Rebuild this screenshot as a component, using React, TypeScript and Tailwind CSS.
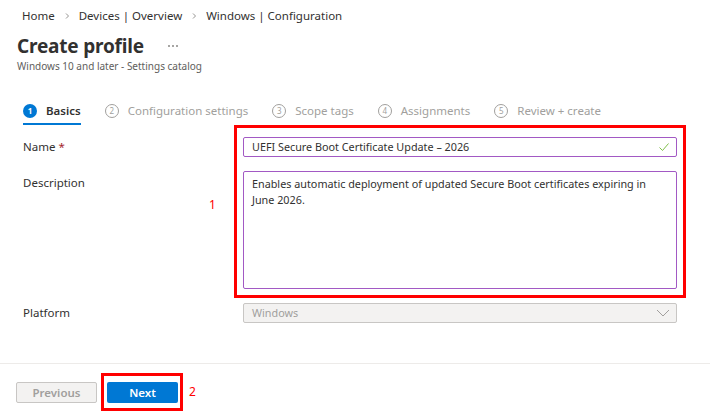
import React from "react";

const steps = [
  { n: 1, label: "Basics", active: true },
  { n: 2, label: "Configuration settings" },
  { n: 3, label: "Scope tags" },
  { n: 4, label: "Assignments" },
  { n: 5, label: "Review + create" },
];

const Chevron = () => (
  <svg width="8" height="8" viewBox="0 0 8 8" className="mx-[8px]">
    <path d="M3 1.5 5.5 4 3 6.5" fill="none" stroke="#8a8886" strokeWidth="0.9" />
  </svg>
);

const App: React.FC = () => {
  return (
    <div
      className="relative w-[710px] h-[420px] bg-white text-[#323130] overflow-hidden"
      style={{ fontFamily: '"Noto Sans", "Open Sans", sans-serif' }}
    >
      {/* breadcrumb */}
      <div className="flex items-center pl-[22px] pt-[6px] h-[32px] text-[11.5px] leading-[20px] items-start">
        <div className="flex items-center h-[20px]">
          <span>Home</span>
          <Chevron />
          <span>Devices | Overview</span>
          <Chevron />
          <span>Windows | Configuration</span>
        </div>
      </div>

      {/* title */}
      <div className="flex items-center pl-[17px] h-[28px]">
        <h1 className="text-[19px] font-bold leading-[28px] tracking-[-0.2px]">Create profile</h1>
        <span className="ml-[24px] flex gap-[2px] items-center">
          <span className="w-[2px] h-[2px] rounded-full bg-[#8a8886]" />
          <span className="w-[2px] h-[2px] rounded-full bg-[#8a8886]" />
          <span className="w-[2px] h-[2px] rounded-full bg-[#8a8886]" />
        </span>
      </div>
      <div className="pl-[17px] text-[10px] leading-[12px] text-[#605e5c]">
        Windows 10 and later - Settings catalog
      </div>

      {/* steps */}
      <div className="flex pl-[23px] mt-[28px] h-[25px]">
        {steps.map((s) => (
          <div
            key={s.n}
            className={`flex items-start h-[25px] mr-[24px] ${s.active ? "border-b-2 border-[#0078d4]" : ""}`}
          >
            <div className="flex items-center h-[22px]">
              <span
                className={`flex items-center justify-center w-[14px] h-[14px] rounded-full text-[8px] ${
                  s.active ? "bg-[#0078d4] text-white font-bold" : "border border-[#a19f9d] text-[#a19f9d]"
                }`}
              >
                {s.n}
              </span>
              <span
                className={`ml-[9px] text-[11.5px] ${s.active ? "font-semibold text-[#323130]" : "text-[#a19f9d]"}`}
              >
                {s.label}
              </span>
            </div>
          </div>
        ))}
      </div>

      {/* form */}
      <div className="mt-[12px] pl-[23px] text-[11.5px]">
        <div className="flex items-center h-[20px]">
          <div className="w-[220px]">
            Name <span className="text-[#a4262c]">*</span>
          </div>
          <div className="relative w-[434px] h-[20px] border border-[#a259c4] rounded-[2px] flex items-center pl-[8px] text-[10.8px] text-[#323130]">
            UEFI Secure Boot Certificate Update – 2026
            <svg width="12" height="12" viewBox="0 0 12 12" className="absolute right-[6px] top-[3px]">
              <path d="M1.5 6.5 4.5 9.5 10.5 2.5" fill="none" stroke="#7fbf4a" strokeWidth="1" />
            </svg>
          </div>
        </div>

        <div className="flex mt-[14px]">
          <div className="w-[220px] pt-[3px]">Description</div>
          <div className="w-[434px] h-[118px] border border-[#a259c4] rounded-[2px] px-[8px] pt-[4px] text-[10.8px] leading-[16px] whitespace-nowrap">
            Enables automatic deployment of updated Secure Boot certificates expiring in
            <br />
            June 2026.
          </div>
        </div>

        <div className="flex items-center mt-[14px] h-[20px]">
          <div className="w-[220px]">Platform</div>
          <div className="relative w-[434px] h-[20px] border border-[#c8c6c4] bg-[#f3f2f1] rounded-[2px] flex items-center pl-[8px] text-[10.8px] text-[#a19f9d]">
            Windows
            <svg width="14" height="10" viewBox="0 0 14 10" className="absolute right-[6px] top-[4px]">
              <path d="M1 2 7 8 13 2" fill="none" stroke="#a19f9d" strokeWidth="1" />
            </svg>
          </div>
        </div>
      </div>

      {/* footer */}
      <div className="absolute left-0 right-0 top-[363px] border-t border-[#edebe9]" />
      <div className="absolute left-[16px] top-[382px] flex items-center gap-[10px] text-[11.5px] font-semibold">
        <button className="w-[81px] h-[21px] border border-[#c8c6c4] bg-[#f3f2f1] text-[#a19f9d] rounded-[2px]">
          Previous
        </button>
        <button className="w-[71px] h-[21px] bg-[#0078d4] text-white rounded-[2px]">Next</button>
      </div>

      {/* annotations */}
      <div className="absolute left-[234px] top-[125px] w-[452px] h-[173px] border-[3px] border-[#ff0000] pointer-events-none" />
      <div className="absolute left-[209px] top-[196px] text-[12px] text-[#ff0000]">1</div>
      <div className="absolute left-[101px] top-[373px] w-[82px] h-[38px] border-[3px] border-[#ff0000] pointer-events-none" />
      <div className="absolute left-[189px] top-[383px] text-[12px] text-[#ff0000]">2</div>
    </div>
  );
};

export default App;
